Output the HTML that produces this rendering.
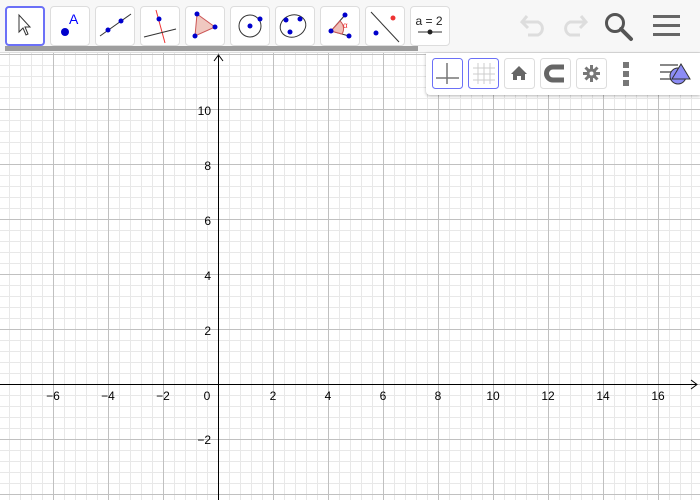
<!DOCTYPE html><html><head><style>
body{margin:0;width:700px;height:500px;overflow:hidden;background:#fff;font-family:"Liberation Sans",sans-serif;position:relative}
.tb{position:absolute;left:0;top:0;width:700px;height:52px;background:#f7f7f7;border-bottom:1px solid #ddd}
.btn{position:absolute;top:6px;width:38px;height:38px;background:#fff;border:1px solid #ddd;border-radius:4px}
</style></head><body>
<svg width="700" height="500" style="position:absolute;left:0;top:0" font-family="Liberation Sans" font-size="12">
<defs><pattern id="mn" x="218" y="384" width="11" height="11" patternUnits="userSpaceOnUse"><path d="M0.5 0V11M0 0.5H11" stroke="#e8e8e8" fill="none"/></pattern>
<pattern id="mj" x="218" y="384" width="55" height="55" patternUnits="userSpaceOnUse"><path d="M0.5 0V55M0 0.5H55" stroke="#c0c0c0" fill="none"/></pattern></defs>
<rect x="0" y="52" width="700" height="448" fill="url(#mn)"/>
<rect x="0" y="52" width="700" height="448" fill="url(#mj)"/>
<line x1="0" y1="384.5" x2="696" y2="384.5" stroke="#000"/>
<path d="M691 380L697 384.5L691 389" stroke="#000" fill="none"/>
<line x1="218.5" y1="56" x2="218.5" y2="500" stroke="#000"/>
<path d="M214 61L218.5 55L223 61" stroke="#000" fill="none"/>
<g text-anchor="middle">
<text x="53" y="400">−6</text><text x="108" y="400">−4</text><text x="163" y="400">−2</text><text x="207" y="400">0</text>
<text x="273" y="400">2</text><text x="328" y="400">4</text><text x="383" y="400">6</text><text x="438" y="400">8</text>
<text x="493" y="400">10</text><text x="548" y="400">12</text><text x="603" y="400">14</text><text x="658" y="400">16</text></g>
<g text-anchor="end"><text x="211" y="115">10</text><text x="211" y="170">8</text><text x="211" y="225">6</text><text x="211" y="280">4</text><text x="211" y="335">2</text><text x="211" y="444">−2</text></g>
</svg>
<div class="tb"></div>
<div style="position:absolute;left:5px;top:46px;width:413px;height:5px;background:#9e9e9e"></div>
<div class="btn" style="left:5px;border:2px solid #6b70f7;width:36px;height:36px"></div>
<div class="btn" style="left:50px"></div><div class="btn" style="left:95px"></div><div class="btn" style="left:140px"></div><div class="btn" style="left:185px"></div><div class="btn" style="left:230px"></div><div class="btn" style="left:275px"></div><div class="btn" style="left:320px"></div><div class="btn" style="left:365px"></div><div class="btn" style="left:410px"></div>
<svg width="700" height="100" style="position:absolute;left:0;top:0" font-family="Liberation Sans">
<path d="M19 15V32L23 28L26 35L28 34L25 27L30 27Z" fill="#fff" stroke="#333"/>
<circle cx="65" cy="32" r="4" fill="#00c"/><text x="69" y="24" fill="#00f" font-size="14">A</text>
<line x1="100" y1="36" x2="131" y2="14" stroke="#333"/><circle cx="108" cy="30" r="2.5" fill="#00c"/><circle cx="121" cy="21" r="2.5" fill="#00c"/>
<line x1="156" y1="10" x2="165" y2="43" stroke="#e33"/><line x1="144" y1="37" x2="176" y2="29" stroke="#333"/><circle cx="159" cy="19" r="2.5" fill="#00c"/>
<path d="M197 14L215 27L195 36Z" fill="#f0c8c0" stroke="#c55"/><circle cx="197" cy="14" r="2.5" fill="#00c"/><circle cx="215" cy="27" r="2.5" fill="#00c"/><circle cx="195" cy="36" r="2.5" fill="#00c"/>
<circle cx="250" cy="26" r="11" fill="none" stroke="#333"/><circle cx="250" cy="26" r="2.5" fill="#00c"/><circle cx="260" cy="19" r="2.5" fill="#00c"/>
<ellipse cx="293" cy="26" rx="13" ry="11" fill="none" stroke="#333" transform="rotate(-20 293 26)"/><circle cx="286" cy="20" r="2.5" fill="#00c"/><circle cx="300" cy="19" r="2.5" fill="#00c"/><circle cx="290" cy="32" r="2.5" fill="#00c"/>
<path d="M331 31L345 15M331 31L349 36" stroke="#333" fill="none"/><path d="M331 31L340 21A10 10 0 0 1 342 34Z" fill="#f0c0b8" stroke="#c55"/><circle cx="345" cy="15" r="2.5" fill="#00c"/><circle cx="331" cy="31" r="2.5" fill="#00c"/><circle cx="349" cy="36" r="2.5" fill="#00c"/><text x="343" y="28" fill="#e33" font-size="8">α</text>
<line x1="371" y1="12" x2="399" y2="42" stroke="#333"/><circle cx="393" cy="18" r="2.5" fill="#e33"/><circle cx="376" cy="33" r="2.5" fill="#00c"/>
<text x="429" y="25" font-size="12" text-anchor="middle" fill="#222">a = 2</text><line x1="418" y1="32" x2="442" y2="32" stroke="#333"/><circle cx="430" cy="32" r="2.5" fill="#222"/>
<path d="M527 16L522 22L528 28M522 22H538A7 7 0 0 1 538 35H528" stroke="#ddd" stroke-width="3" fill="none"/>
<path d="M581 16L586 22L580 28M586 22H570A7 7 0 0 0 570 35H580" stroke="#ddd" stroke-width="3" fill="none"/>
<circle cx="615" cy="23" r="8.5" fill="none" stroke="#555" stroke-width="3"/><line x1="621" y1="29" x2="631" y2="39" stroke="#555" stroke-width="4" stroke-linecap="round"/>
<g fill="#666"><rect x="653" y="15" width="27" height="3"/><rect x="653" y="24" width="27" height="3"/><rect x="653" y="33" width="27" height="3"/></g>
</svg>
<div style="position:absolute;left:426px;top:53px;width:274px;height:42px;background:#fff;box-shadow:0 1px 3px rgba(0,0,0,.3);border-radius:0 0 0 4px"></div>
<svg width="280" height="50" style="position:absolute;left:420px;top:50px">
<rect x="12.5" y="8.5" width="30" height="30" rx="3" fill="#fff" stroke="#6b70f7"/>
<path d="M27 13V34M16 28H39" stroke="#777" stroke-width="1.5"/>
<rect x="48.5" y="8.5" width="30" height="30" rx="3" fill="#fff" stroke="#6b70f7"/>
<path d="M58 13V34M64 13V34M70 13V34M53 18H75M53 24H75M53 30H75" stroke="#ccc"/>
<rect x="84.5" y="8.5" width="30" height="30" rx="3" fill="#fff" stroke="#ddd"/>
<path d="M91 24L99 16L107 24H105V30H101V26H97V30H93V24Z" fill="#666"/>
<rect x="120.5" y="8.5" width="30" height="30" rx="3" fill="#fff" stroke="#ddd"/>
<path d="M144 17H133A6.5 6.5 0 0 0 133 30H144" stroke="#666" stroke-width="5" fill="none"/>
<rect x="156.5" y="8.5" width="30" height="30" rx="3" fill="#fff" stroke="#ddd"/>
<g stroke="#777" stroke-width="3"><line x1="171.5" y1="15" x2="171.5" y2="32"/><line x1="163" y1="23.5" x2="180" y2="23.5"/><line x1="165.5" y1="17.5" x2="177.5" y2="29.5"/><line x1="177.5" y1="17.5" x2="165.5" y2="29.5"/></g>
<circle cx="171.5" cy="23.5" r="5" fill="#777"/><circle cx="171.5" cy="23.5" r="2" fill="#fff"/>
<g fill="#777"><rect x="203" y="12" width="6" height="6"/><rect x="203" y="21" width="6" height="6"/><rect x="203" y="30" width="6" height="6"/></g>
<g stroke="#888" stroke-width="2"><line x1="240" y1="15" x2="258" y2="15"/><line x1="240" y1="22" x2="252" y2="22"/><line x1="240" y1="29" x2="252" y2="29"/></g>
<circle cx="258" cy="26" r="8" fill="#8c8cf5" stroke="#333"/><path d="M261 14L270 29H252Z" fill="#8c8cf5" stroke="#333"/>
</svg>
</body></html>
